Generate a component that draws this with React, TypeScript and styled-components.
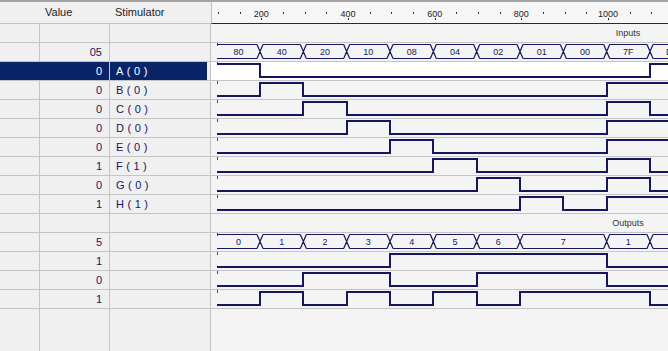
import React from "react";
import styled, { createGlobalStyle } from "styled-components";

const NAVY = "#16165e";
const STEP = 130 / 3;
const X = (k: number) => 49 + STEP * k;
// segment edges of the wave cell: first segment starts at 6, then one per 100ns
const bounds = [6, ...Array.from({ length: 11 }, (_, k) => X(k))];

const inputBus = ["80", "40", "20", "10", "08", "04", "02", "01", "00", "7F", "D9"];
const outputBus = ["0", "1", "2", "3", "4", "5", "6", "7", "7", "1", "0"];
const stimValues = [0, 0, 0, 0, 0, 1, 0, 1];

const inputs = ["A", "B", "C", "D", "E", "F", "G", "H"].map((name, i) => ({
  name,
  value: stimValues[i],
  levels: inputBus.map((v) => (parseInt(v, 16) >> (7 - i)) & 1),
}));

const outputs = [2, 1, 0].map((bit) => ({
  bit,
  levels: outputBus.map((v) => (parseInt(v, 10) >> bit) & 1),
}));

const signalPath = (levels: number[]) => {
  const y = (l: number) => (l ? 2 : 15);
  let d = `M ${bounds[0]} ${y(levels[0])}`;
  levels.forEach((l, i) => {
    d += ` H ${bounds[i + 1].toFixed(2)}`;
    if (i + 1 < levels.length && levels[i + 1] !== l) d += ` V ${y(levels[i + 1])}`;
  });
  return d;
};

const Signal = ({ levels }: { levels: number[] }) => (
  <svg width="457" height="18">
    <path d={`M 6.5 0 V 3`} stroke="#b02020" strokeWidth="1" />
    <path d={signalPath(levels)} stroke={NAVY} strokeWidth="2" fill="none" shapeRendering="crispEdges" />
  </svg>
);

const Bus = ({ values }: { values: string[] }) => {
  const groups: { a: number; b: number; label: string }[] = [];
  values.forEach((v, i) => {
    const last = groups[groups.length - 1];
    if (last && last.label === v) last.b = bounds[i + 1];
    else groups.push({ a: bounds[i], b: bounds[i + 1], label: v });
  });
  const top = 1.5;
  const bot = 15.5;
  let d = "";
  groups.forEach((g, i) => {
    const a = i === 0 ? g.a : g.a + 3;
    const b = g.b - 3;
    d += ` M ${a.toFixed(2)} ${top} H ${b.toFixed(2)} M ${a.toFixed(2)} ${bot} H ${b.toFixed(2)}`;
    if (i > 0) {
      const t = g.a;
      d += ` M ${(t - 3).toFixed(2)} ${top} L ${(t + 3).toFixed(2)} ${bot} M ${(t - 3).toFixed(2)} ${bot} L ${(t + 3).toFixed(2)} ${top}`;
    }
  });
  return (
    <svg width="457" height="18">
      <path d="M 6.5 0 V 3" stroke="#b02020" strokeWidth="1" />
      <path d={d} stroke={NAVY} strokeWidth="1.2" fill="none" />
      {groups.map((g) => (
        <BusText key={g.a} x={(g.a + g.b) / 2} y="12" textAnchor="middle">
          {g.label}
        </BusText>
      ))}
    </svg>
  );
};

const Ruler = () => {
  // a dot every 50ns, a label every 200ns
  const marks = Array.from({ length: 22 }, (_, n) => n);
  return (
    <svg width="457" height="21">
      {marks.map((n) => {
        const x = 6 + (STEP / 2) * n;
        if (n % 4 === 2)
          return (
            <g key={n}>
              <RulerText x={x} y="15" textAnchor="middle">
                {100 + 50 * n}
              </RulerText>
              <rect x={Math.round(x)} y="16" width="1" height="2" fill="#222" />
            </g>
          );
        return <rect key={n} x={Math.round(x)} y="10" width="1" height="2" fill="#333" />;
      })}
    </svg>
  );
};

export default function App() {
  return (
    <>
      <GlobalStyle />
      <Frame>
        <HeaderRow>
          <HeadCell $w={40} />
          <HeadCell $w={70}>Value</HeadCell>
          <HeadCell $w={101}>Stimulator</HeadCell>
          <RulerCell>
            <Ruler />
          </RulerCell>
        </HeaderRow>

        <Row>
          <NameCell />
          <ValueCell />
          <StimCell />
          <WaveCell>
            <GroupLabel>Inputs</GroupLabel>
          </WaveCell>
        </Row>
        <Row>
          <NameCell />
          <ValueCell>05</ValueCell>
          <StimCell />
          <WaveCell>
            <Bus values={inputBus} />
          </WaveCell>
        </Row>
        {inputs.map((s, i) => (
          <Row key={s.name}>
            <NameCell $selected={i === 0} />
            <ValueCell $selected={i === 0}>{s.value}</ValueCell>
            <StimCell $selected={i === 0}>
              {s.name}({s.value})
            </StimCell>
            <WaveCell $selected={i === 0}>
              <Signal levels={s.levels} />
            </WaveCell>
          </Row>
        ))}
        <Row>
          <NameCell />
          <ValueCell />
          <StimCell />
          <WaveCell>
            <GroupLabel>Outputs</GroupLabel>
          </WaveCell>
        </Row>
        <Row>
          <NameCell />
          <ValueCell>5</ValueCell>
          <StimCell />
          <WaveCell>
            <Bus values={outputBus} />
          </WaveCell>
        </Row>
        {outputs.map((s) => (
          <Row key={s.bit}>
            <NameCell />
            <ValueCell>{(5 >> s.bit) & 1}</ValueCell>
            <StimCell />
            <WaveCell>
              <Signal levels={s.levels} />
            </WaveCell>
          </Row>
        ))}
        <Filler>
          <NameCell />
          <ValueCell />
          <StimCell />
          <WaveCell />
        </Filler>
      </Frame>
    </>
  );
}

const GlobalStyle = createGlobalStyle`
  html, body { margin: 0; padding: 0; background: #f0f0f0; }
  body { font-family: "Liberation Sans", Arial, sans-serif; font-size: 11px; }
`;

const Frame = styled.div`
  height: 351px;
  display: flex;
  flex-direction: column;
  overflow: hidden;
  border-top: 2px solid #a3a3a3;
  box-sizing: border-box;
`;

const HeaderRow = styled.div`
  display: flex;
  height: 22px;
  flex-shrink: 0;
`;

const HeadCell = styled.div<{ $w: number }>`
  width: ${(p) => p.$w}px;
  flex-shrink: 0;
  padding-left: 5px;
  box-sizing: border-box;
  line-height: 20px;
  color: #222;
  border-bottom: 1px solid #c4c4c4;
`;

const RulerCell = styled.div`
  flex: 1;
  border-left: 1px solid #c0c0c0;
  border-bottom: 1px solid #2a2a2a;
  background: #f6f6f6;
  overflow: hidden;
`;

const Row = styled.div`
  display: flex;
  height: 19px;
  flex-shrink: 0;
  border-bottom: 1px solid #c4c4c4;
  box-sizing: border-box;
`;

const Filler = styled.div`
  display: flex;
  flex: 1;
`;

const NameCell = styled.div<{ $selected?: boolean }>`
  width: 40px;
  flex-shrink: 0;
  box-sizing: border-box;
  border-right: 1px solid ${(p) => (p.$selected ? "#0a246a" : "#c4c4c4")};
  background: ${(p) => (p.$selected ? "#0a246a" : "#f0f0f0")};
`;

const ValueCell = styled.div<{ $selected?: boolean }>`
  width: 70px;
  flex-shrink: 0;
  box-sizing: border-box;
  border-right: 1px solid #c4c4c4;
  padding-right: 7px;
  text-align: right;
  line-height: 18px;
  color: ${(p) => (p.$selected ? "#fff" : NAVY)};
  background: ${(p) => (p.$selected ? "#0a246a" : "#f0f0f0")};
`;

const StimCell = styled.div<{ $selected?: boolean }>`
  width: 101px;
  flex-shrink: 0;
  box-sizing: border-box;
  border-right: 1px solid #c0c0c0;
  padding-left: 6px;
  line-height: 18px;
  letter-spacing: 3.5px;
  color: ${(p) => (p.$selected ? "#fff" : NAVY)};
  background: ${(p) => (p.$selected ? "#0a246a" : "#f0f0f0")};
  box-shadow: ${(p) => (p.$selected ? "inset -3px 0 0 #f0f0f0" : "none")};
`;

const WaveCell = styled.div<{ $selected?: boolean }>`
  flex: 1;
  overflow: hidden;
  display: flex;
  align-items: center;
  background: ${(p) => (p.$selected ? "#ffffff" : "#f4f4f4")};
  svg { display: block; }
`;

const GroupLabel = styled.span`
  margin-left: 387px;
  width: 60px;
  text-align: center;
  font-size: 9px;
  color: #333;
`;

const BusText = styled.text`
  font-family: "Liberation Sans", Arial, sans-serif;
  font-size: 9px;
  fill: ${NAVY};
`;

const RulerText = styled.text`
  font-family: "Liberation Sans", Arial, sans-serif;
  font-size: 9px;
  fill: #222;
`;
